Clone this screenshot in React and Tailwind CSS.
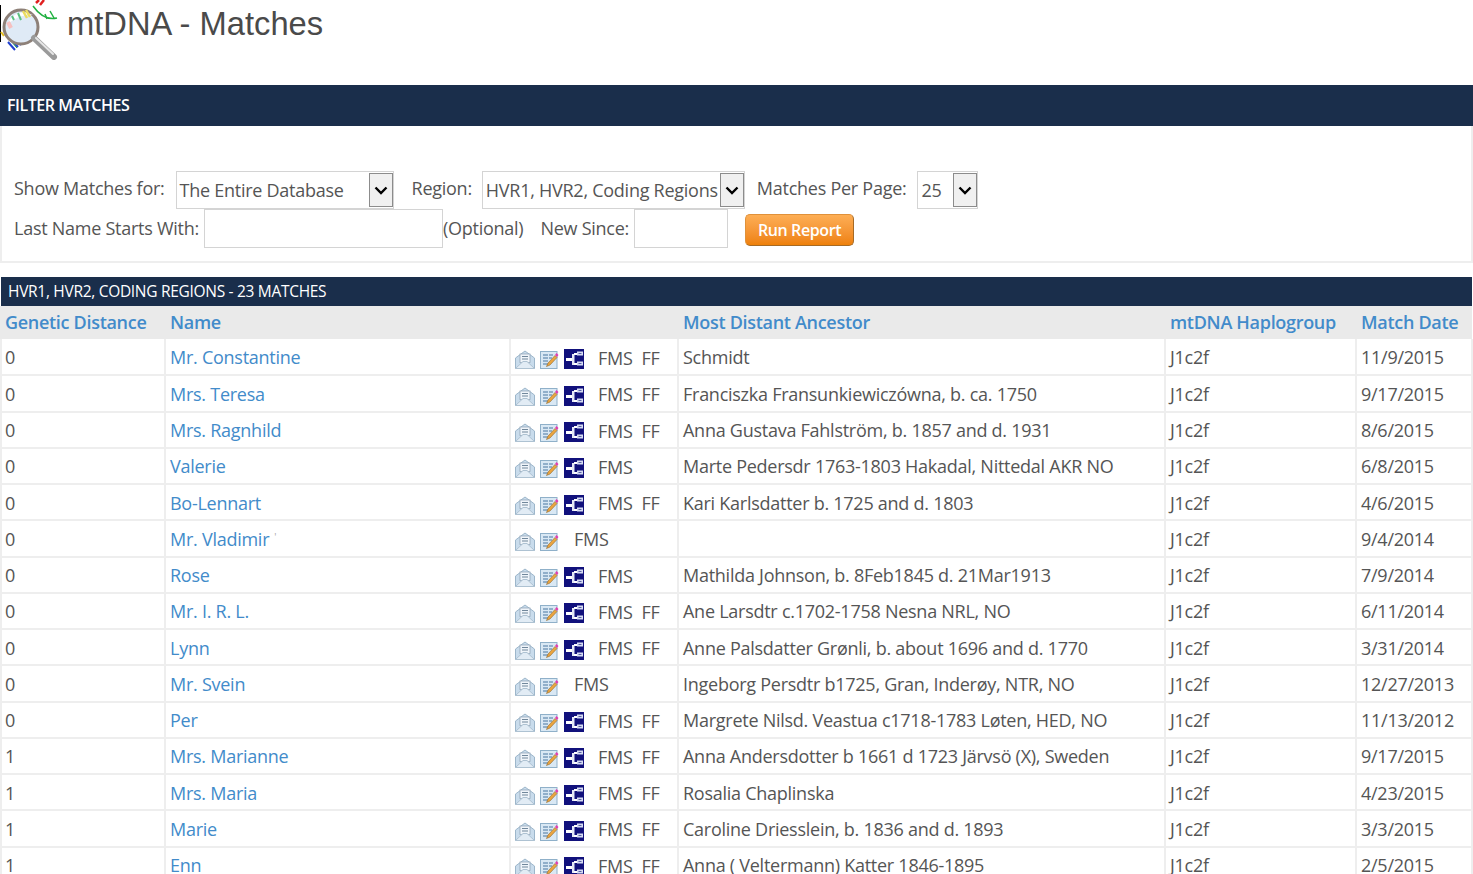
import React from "react";

const rows = [
  ["0", "Mr. Constantine", true, "Schmidt", "11/9/2015"],
  ["0", "Mrs. Teresa", true, "Franciszka Fransunkiewiczówna, b. ca. 1750", "9/17/2015"],
  ["0", "Mrs. Ragnhild", true, "Anna Gustava Fahlström, b. 1857 and d. 1931", "8/6/2015"],
  ["0", "Valerie", "fms", "Marte Pedersdr 1763-1803 Hakadal, Nittedal AKR NO", "6/8/2015"],
  ["0", "Bo-Lennart", true, "Kari Karlsdatter b. 1725 and d. 1803", "4/6/2015"],
  ["0", "Mr. Vladimir", false, "", "9/4/2014"],
  ["0", "Rose", "fms", "Mathilda Johnson, b. 8Feb1845 d. 21Mar1913", "7/9/2014"],
  ["0", "Mr. I. R. L.", true, "Ane Larsdtr c.1702-1758 Nesna NRL, NO", "6/11/2014"],
  ["0", "Lynn", true, "Anne Palsdatter Grønli, b. about 1696 and d. 1770", "3/31/2014"],
  ["0", "Mr. Svein", false, "Ingeborg Persdtr b1725, Gran, Inderøy, NTR, NO", "12/27/2013"],
  ["0", "Per", true, "Margrete Nilsd. Veastua c1718-1783 Løten, HED, NO", "11/13/2012"],
  ["1", "Mrs. Marianne", true, "Anna Andersdotter b 1661 d 1723 Järvsö (X), Sweden", "9/17/2015"],
  ["1", "Mrs. Maria", true, "Rosalia Chaplinska", "4/23/2015"],
  ["1", "Marie", true, "Caroline Driesslein, b. 1836 and d. 1893", "3/3/2015"],
  ["1", "Enn", true, "Anna ( Veltermann) Katter 1846-1895", "2/5/2015"],
];

const Logo = () => (
  <svg width="60" height="60" viewBox="0 0 60 60" className="shrink-0">
    <path d="M0.5 5 V42" stroke="#000" strokeWidth="1" />
    <path d="M36 3 L39 0 M40 5 L44 0" stroke="#e02020" strokeWidth="2.5" />
    <path d="M33 6 C40 16 48 20 57 18" stroke="#20b040" strokeWidth="1.5" fill="none" />
    <path d="M50 11 L54 18 M45 14 L47 19" stroke="#20b040" strokeWidth="1.5" />
    <path d="M8 42 L15 50 M12 41 L18 47 M17 41 L21 45" stroke="#2040d0" strokeWidth="2" />
    <path d="M11 41 L17 48" stroke="#20a040" strokeWidth="1" />
    <path d="M1 32 L4 36" stroke="#e8c020" strokeWidth="2" />
    <circle cx="21" cy="27" r="17" fill="#dfeaf6" stroke="#8d8078" strokeWidth="3" />
    <path d="M8 24 C11 14 22 9 33 15 C24 14 15 18 8 24 Z" fill="#fff" />
    <path d="M12 16 L14 20 M18 13 L21 20" stroke="#5cc080" strokeWidth="2" />
    <path d="M23 11 L27 18 M26 10 L30 17" stroke="#ecdc60" strokeWidth="2.5" />
    <path d="M8 22 L11 28" stroke="#f6c0c0" strokeWidth="4" />
    <path d="M34 38 L54 57" stroke="#9a9a9a" strokeWidth="6" strokeLinecap="round" />
    <path d="M36 38 L53 54" stroke="#e6e6e6" strokeWidth="2" strokeLinecap="round" />
  </svg>
);

const SelectArrow = () => (
  <span className="w-[24px] h-[34px] bg-[#f0f0f0] border border-[#8c8c8c] flex items-center justify-center shrink-0">
    <svg width="14" height="9" viewBox="0 0 14 9">
      <path d="M1.5 1.5 L7 7 L12.5 1.5" stroke="#000" strokeWidth="2.4" fill="none" />
    </svg>
  </span>
);

const FakeSelect = ({ value, className }) => (
  <span className={`h-[38px] border border-[#d4d4d4] flex items-center justify-between pl-[3px] text-[18px] ${className}`}>
    <span className="pt-[1px] whitespace-nowrap">{value}</span>
    <SelectArrow />
  </span>
);

const MailIcon = () => (
  <svg width="20" height="19" viewBox="0 0 20 19">
    <path d="M0.5 8 L10 1 L19.5 8 V18.5 H0.5 Z" fill="#c9dcec" stroke="#9db6ca" />
    <rect x="5" y="4" width="10" height="8.5" fill="#f0f5fa" stroke="#93a6b8" strokeWidth="0.8" />
    <path d="M7 6.5 H13 M7 9 H13" stroke="#71879b" />
    <path d="M0.5 18.5 L8 11.5 H12 L19.5 18.5 Z" fill="#e2ecf5" stroke="#aec2d2" />
  </svg>
);

const NoteIcon = () => (
  <svg width="19" height="19" viewBox="0 0 19 19">
    <rect x="0.5" y="1.5" width="16.5" height="17" fill="#d9e8f4" stroke="#8fb0c9" />
    <path d="M3 5 H13 M3 8 H12 M3 11 H9 M3 14 H8" stroke="#4a76a0" strokeWidth="1.2" strokeDasharray="5 1" />
    <path d="M6.5 16.5 L8 13 L15 5.5 L17 7.5 L10 15 Z" fill="#eba53f" stroke="#8f6a32" strokeWidth="0.6" />
    <path d="M15 5 L16.5 3 L18.5 5 L17 7 Z" fill="#e23fb0" />
  </svg>
);

const TreeIcon = () => (
  <svg width="20" height="20" viewBox="0 0 20 20">
    <rect width="20" height="20" fill="#11117c" />
    <rect x="2" y="9" width="7" height="3" fill="#fff" />
    <rect x="8" y="5" width="2.5" height="11" fill="#e4e8f6" />
    <rect x="10" y="4" width="4" height="2" fill="#fff" />
    <rect x="10" y="14" width="4" height="2" fill="#fff" />
    <rect x="13" y="2.5" width="6" height="4" fill="#d6dcf2" />
    <rect x="13" y="12.5" width="6" height="4" fill="#d6dcf2" />
    <rect x="14.5" y="4" width="3" height="1" fill="#5a60a8" />
    <rect x="14.5" y="14" width="3" height="1" fill="#5a60a8" />
  </svg>
);

const ActionsCell = ({ tree }) => (
  <div className="flex items-center pl-[4px] pt-[3px]">
    <span className="w-[25px] flex mt-[3px]"><MailIcon /></span>
    <span className="w-[24px] flex mt-[3px]"><NoteIcon /></span>
    {tree ? (
      <>
        <span className="w-[34px] flex mt-[2px]"><TreeIcon /></span>
        <span className="w-[43.5px]">FMS</span>
        {tree === true && <span>FF</span>}
      </>
    ) : (
      <span className="pl-[10px]">FMS</span>
    )}
  </div>
);

const Td = ({ children, className = "" }) => (
  <td className={`border-r-2 border-b-2 border-[#eeeeee] px-[4px] pt-[2px] align-middle overflow-hidden whitespace-nowrap ${className}`}>
    {children}
  </td>
);

const Th = ({ children }) => (
  <th className="px-[5px] text-left font-semibold text-[18px] tracking-[-0.3px] text-[#428bca]">{children}</th>
);

export default function App() {
  return (
    <div className="h-[874px] overflow-hidden bg-white text-[#555555] font-['Open_Sans',sans-serif]">
      <div className="h-[85px] flex items-start">
        <Logo />
        <h1 className="font-['Liberation_Sans',sans-serif] text-[32.7px] leading-[48px] ml-[7px] text-[#4a4a4a]">mtDNA - Matches</h1>
      </div>

      <div className="h-[41px] bg-[#1a2e4b] flex items-center px-[7px] pb-[2px] text-white text-[16px] font-semibold tracking-[-0.45px]">
        FILTER MATCHES
      </div>

      <div className="h-[137px] border-x-2 border-b-2 border-[#eeeeee] pl-[12px] pt-[45px] text-[18px] tracking-[-0.26px]">
        <div className="flex items-center h-[38px]">
          <span className="-mt-[4px]">Show Matches for:</span>
          <FakeSelect value="The Entire Database" className="w-[218px] ml-[11px]" />
          <span className="ml-[18px] -mt-[4px]">Region:</span>
          <FakeSelect value="HVR1, HVR2, Coding Regions" className="w-[263px] ml-[10px]" />
          <span className="ml-[12px] -mt-[4px]">Matches Per Page:</span>
          <FakeSelect value="25" className="w-[61px] ml-[11px]" />
        </div>
        <div className="flex items-center h-[39px]">
          <span>Last Name Starts With:</span>
          <span className="w-[239px] h-[39px] border border-[#d4d4d4] ml-[5px]" />
          <span>(Optional)</span>
          <span className="ml-[17px]">New Since:</span>
          <span className="w-[94px] h-[39px] border border-[#d4d4d4] ml-[5px]" />
          <button className="ml-[17px] mt-[2px] w-[109px] h-[32px] rounded-[5px] bg-gradient-to-b from-[#fdae54] to-[#ee8107] border border-[#e0913a] border-b-[#a66a25] border-r-[#a66a25] text-white text-[16px] font-semibold tracking-[-0.4px]">
            Run Report
          </button>
        </div>
      </div>

      <div className="mt-[14px] mx-[1px] h-[29px] bg-[#1a2e4b] flex items-center px-[7px] text-white text-[15.5px] tracking-[-0.3px]">
        HVR1, HVR2, CODING REGIONS - 23 MATCHES
      </div>

      <table className="table-fixed border-collapse w-[1472px] text-[18px] tracking-[-0.26px]">
        <colgroup>
          <col className="w-[165px]" />
          <col className="w-[345px]" />
          <col className="w-[168px]" />
          <col className="w-[487px]" />
          <col className="w-[191px]" />
          <col className="w-[116px]" />
        </colgroup>
        <thead>
          <tr className="h-[33px] bg-[#eaeaea]">
            <Th>Genetic Distance</Th>
            <Th>Name</Th>
            <Th />
            <Th>Most Distant Ancestor</Th>
            <Th>mtDNA Haplogroup</Th>
            <Th>Match Date</Th>
          </tr>
        </thead>
        <tbody>
          {rows.map((r, i) => (
            <tr key={i} className="h-[36.25px]">
              <Td className="shadow-[inset_2px_0_0_#eeeeee] pl-[5px]">{r[0]}</Td>
              <Td className="text-[#428bca]">
                {r[1]}
                {r[1] === "Mr. Vladimir" && <sup className="text-[#aaaaaa] text-[10px] ml-[5px]">'</sup>}
              </Td>
              <Td className="!p-0"><ActionsCell tree={r[2]} /></Td>
              <Td>{r[3]}</Td>
              <Td>J1c2f</Td>
              <Td>{r[4]}</Td>
            </tr>
          ))}
        </tbody>
      </table>
    </div>
  );
}
